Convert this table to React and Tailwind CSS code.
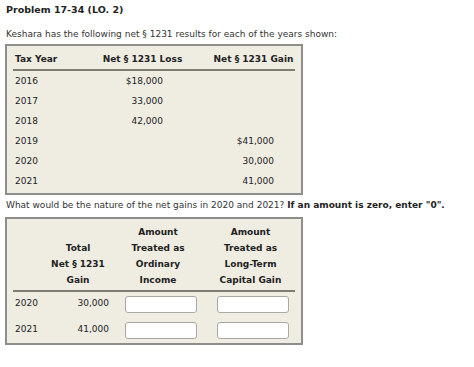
const years = [
  { year: '2016', loss: '$18,000', gain: '' },
  { year: '2017', loss: '33,000', gain: '' },
  { year: '2018', loss: '42,000', gain: '' },
  { year: '2019', loss: '', gain: '$41,000' },
  { year: '2020', loss: '', gain: '30,000' },
  { year: '2021', loss: '', gain: '41,000' },
]

const gains = [
  { year: '2020', total: '30,000' },
  { year: '2021', total: '41,000' },
]

function Field() {
  return (
    <input
      type="text"
      className="block w-[72px] h-[17px] bg-white border border-[#a9a9a4] rounded-[3px] outline-none"
    />
  )
}

export default function App() {
  return (
    <div
      className="w-[474px] h-[367px] bg-white text-[#222] text-[9px] px-[5px] pt-[3px]"
      style={{ fontFamily: '"DejaVu Sans", Verdana, sans-serif' }}
    >
      <h1 className="font-bold text-[9.5px] leading-[14px] pl-[1px]">Problem 17-34 (LO. 2)</h1>
      <p className="mt-[10px] leading-[14px] pl-[1px] text-[#333]">
        Keshara has the following net § 1231 results for each of the years shown:
      </p>

      <div className="mt-[3px] w-[298px] border-2 border-[#8e8e8a] bg-[#efede2] px-[6px] pt-[4px] pb-[2px]">
        <div className="grid grid-cols-[79px_101px_18px_85px] border-b-2 border-[#7d7d78] font-bold leading-[16px] pt-[1px] pb-[2px]">
          <div className="pl-[2px]">Tax Year</div>
          <div className="text-center">Net § 1231 Loss</div>
          <div />
          <div className="text-center">Net § 1231 Gain</div>
        </div>
        {years.map((r) => (
          <div key={r.year} className="grid grid-cols-[79px_101px_18px_85px] leading-[20px]">
            <div className="pl-[2px]">{r.year}</div>
            <div className="text-right pr-[30px]">{r.loss}</div>
            <div />
            <div className="text-right pr-[22px]">{r.gain}</div>
          </div>
        ))}
      </div>

      <p className="mt-[3px] leading-[14px] pl-[1px] text-[#333]">
        What would be the nature of the net gains in 2020 and 2021?{' '}
        <span className="font-bold text-[#222]">If an amount is zero, enter "0".</span>
      </p>

      <div className="mt-[5px] w-[298px] border-2 border-[#8e8e8a] bg-[#efede2] px-[6px] pt-[5px] pb-[1px]">
        <div className="grid grid-cols-[32px_66px_94px_91px] items-end border-b-2 border-[#7d7d78] font-bold leading-[16px] pb-[2px] text-center">
          <div />
          <div>
            Total
            <br />
            Net § 1231
            <br />
            Gain
          </div>
          <div>
            Amount
            <br />
            Treated as
            <br />
            Ordinary
            <br />
            Income
          </div>
          <div>
            Amount
            <br />
            Treated as
            <br />
            Long-Term
            <br />
            Capital Gain
          </div>
        </div>
        {gains.map((r, i) => (
          <div
            key={r.year}
            className={`grid grid-cols-[40px_56px_97px_90px] items-center h-[24px] ${i > 0 ? 'mt-[2px]' : ''}`}
          >
            <div className="pl-[2px]">{r.year}</div>
            <div className="text-right">{r.total}</div>
            <div className="pl-[16px]"><Field /></div>
            <div className="pl-[11px]"><Field /></div>
          </div>
        ))}
      </div>
    </div>
  )
}
